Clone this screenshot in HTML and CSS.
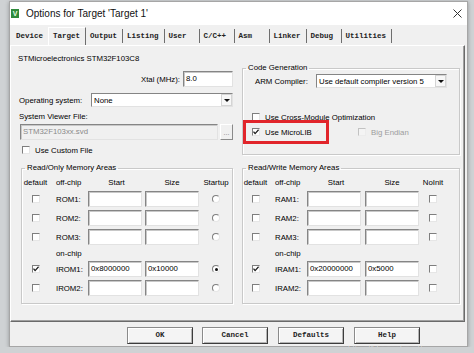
FILE: index.html
```html
<!DOCTYPE html>
<html lang="en">
  <head>
    <meta charset="UTF-8" />
    <meta name="viewport" content="width=device-width, initial-scale=1.0" />
    <title>Options for Target 'Target 1'</title>
    <link rel="stylesheet" href="styles.css">
  </head>
  <body>
    <div class="window">
      <div class="titlebar">
        <span class="app-icon">V</span>
        <span class="title">Options for Target 'Target 1'</span>
        <svg class="close" width="9" height="9" viewBox="0 0 9 9">
          <path d="M0.5 0.5 L8.5 8.5 M8.5 0.5 L0.5 8.5" stroke="#333" stroke-width="1" fill="none" />
        </svg>
      </div>

      <div class="tabs">
        <span class="tab no-sep">Device</span>
        <span class="tab active">Target</span>
        <span class="tab">Output</span>
        <span class="tab">Listing</span>
        <span class="tab">User</span>
        <span class="tab">C/C++</span>
        <span class="tab">Asm</span>
        <span class="tab">Linker</span>
        <span class="tab">Debug</span>
        <span class="tab">Utilities</span>
      </div>

      <div class="panel">
        <div class="col">
          <div class="device">STMicroelectronics STM32F103C8</div>
          <div class="xtal-row">
            <span>Xtal (MHz):</span>
            <span class="field xtal">8.0</span>
          </div>
          <div class="os-row">
            <span class="os-label">Operating system:</span>
            <span class="select os">None<span class="arrow"><i></i></span></span>
          </div>
          <div class="svf-label">System Viewer File:</div>
          <div class="svf-row">
            <span class="field disabled">STM32F103xx.svd</span>
            <span class="browse">...</span>
          </div>
          <div class="check-row"><span class="check"></span>Use Custom File</div>

          <fieldset class="group ro">
            <legend>Read/Only Memory Areas</legend>
            <div class="mem">
              <span class="c">default</span><span class="lbl">off-chip</span><span class="c">Start</span><span class="c">Size</span><span class="c">Startup</span>

              <span class="c check"></span><span class="lbl">ROM1:</span><span class="field"></span><span class="field"></span><span class="c radio"></span>
              <span class="c check"></span><span class="lbl">ROM2:</span><span class="field"></span><span class="field"></span><span class="c radio"></span>
              <span class="c check"></span><span class="lbl">ROM3:</span><span class="field"></span><span class="field"></span><span class="c radio"></span>

              <span></span><span class="lbl onchip">on-chip</span>

              <span class="c check on"><svg width="6" height="6" viewBox="0 0 6 6"><polyline points="0.5,2.6 2.1,4.6 5.6,0.8" /></svg></span><span class="lbl">IROM1:</span><span class="field">0x8000000</span><span class="field">0x10000</span><span class="c radio on"></span>
              <span class="c check"></span><span class="lbl">IROM2:</span><span class="field"></span><span class="field"></span><span class="c radio"></span>
            </div>
          </fieldset>
        </div>

        <div class="col">
          <fieldset class="group codegen">
            <legend>Code Generation</legend>
            <div class="arm-row">
              <span class="arm-label">ARM Compiler:</span>
              <span class="select arm">Use default compiler version 5<span class="arrow"><i></i></span></span>
            </div>
            <div class="opt-row first">
              <span class="opt"><span class="check"></span>Use Cross-Module Optimization</span>
            </div>
            <div class="opt-row">
              <span class="opt wide">
                <span class="check on"><svg width="6" height="6" viewBox="0 0 6 6"><polyline points="0.5,2.6 2.1,4.6 5.6,0.8" /></svg></span>Use MicroLIB
                <span class="highlight"></span>
              </span>
              <span class="opt off"><span class="check dim"></span>Big Endian</span>
            </div>
          </fieldset>

          <fieldset class="group rw">
            <legend>Read/Write Memory Areas</legend>
            <div class="mem">
              <span class="c">default</span><span class="lbl">off-chip</span><span class="c">Start</span><span class="c">Size</span><span class="c">NoInit</span>

              <span class="c check"></span><span class="lbl">RAM1:</span><span class="field"></span><span class="field"></span><span class="c check"></span>
              <span class="c check"></span><span class="lbl">RAM2:</span><span class="field"></span><span class="field"></span><span class="c check"></span>
              <span class="c check"></span><span class="lbl">RAM3:</span><span class="field"></span><span class="field"></span><span class="c check"></span>

              <span></span><span class="lbl onchip">on-chip</span>

              <span class="c check on"><svg width="6" height="6" viewBox="0 0 6 6"><polyline points="0.5,2.6 2.1,4.6 5.6,0.8" /></svg></span><span class="lbl">IRAM1:</span><span class="field">0x20000000</span><span class="field">0x5000</span><span class="c check"></span>
              <span class="c check"></span><span class="lbl">IRAM2:</span><span class="field"></span><span class="field"></span><span class="c check"></span>
            </div>
          </fieldset>
        </div>
      </div>

      <div class="footer">
        <span class="btn">OK</span>
        <span class="btn">Cancel</span>
        <span class="btn">Defaults</span>
        <span class="btn help">Help</span>
      </div>

      <div class="watermark">https://blog.csdn.net/</div>
    </div>
  </body>
</html>
```

FILE: styles.css
```css
* {
  box-sizing: border-box;
}

body {
  margin: 0;
  background: #cfd2d4;
  font-family: "Liberation Sans", Arial, sans-serif;
  font-size: 7.8px;
  color: #000;
}


.window {
  position: relative;
  width: 459px;
  height: 346px;
  margin: 1px 0 0 9px;
  border: 1px solid #a6a6a6;
  background: #f0f0f0;
  display: flex;
  flex-direction: column;
  box-shadow: 0 1px 4px rgba(0, 0, 0, 0.3);
}


/* title bar */
.titlebar {
  flex: none;
  height: 23px;
  background: #fff;
  display: flex;
  align-items: center;
  padding: 0 5px 0 1px;
}

.app-icon {
  width: 8px;
  height: 9px;
  background: #2f8a3b;
  color: #eaffe4;
  font: bold 7px/9px "Liberation Sans", sans-serif;
  text-align: center;
}

.title {
  margin-left: 7px;
  font-size: 10px;
  color: #111;
}

.close {
  margin-left: auto;
}


/* tabs */
.tabs {
  flex: none;
  height: 20px;
  display: flex;
  align-items: flex-end;
  padding-left: 2px;
  font: bold 7.5px "Liberation Mono", monospace;
  color: #222;
}

.tab {
  min-width: 35px;
  height: 14px;
  line-height: 14px;
  margin-bottom: 2px;
  padding: 0 5px 0 4px;
  border-right: 1px solid #6e6e6e;
}

.tab.no-sep {
  border-right: none;
  min-width: 34px;
}

.tab.active {
  height: 18px;
  line-height: 16px;
  margin-bottom: 0;
  border-left: 1px solid #fff;
  border-top: 1px solid #fff;
}


/* tab page */
.panel {
  flex: none;
  height: 277px;
  margin-right: 2px;
  border-top: 1px solid #fff;
  border-left: 1px solid #fff;
  border-right: 1px solid #6a6a6a;
  border-bottom: 1px solid #6a6a6a;
  box-shadow: inset -1px -1px 0 #a0a0a0;
  display: grid;
  grid-template-columns: 215px 218px;
  column-gap: 9px;
  align-items: start;
  padding: 7px 4px 0 7px;
}

.device {
  line-height: 12px;
}

.xtal-row {
  display: flex;
  justify-content: flex-end;
  align-items: center;
  gap: 3px;
  margin-top: 6px;
  height: 16px;
}

.os-row {
  display: flex;
  justify-content: space-between;
  align-items: center;
  margin-top: 6px;
  height: 14px;
}

.os-label {
  padding-left: 1px;
}

.svf-label {
  margin-top: 4px;
  line-height: 12px;
  padding-left: 1px;
}

.svf-row {
  display: flex;
  gap: 2px;
  margin-top: 1px;
  height: 16px;
  padding-left: 2px;
}

.check-row {
  display: flex;
  align-items: center;
  gap: 5px;
  margin-top: 4px;
  height: 12px;
  padding-left: 4px;
}


/* edit boxes */
.field {
  height: 16px;
  border: 1px solid;
  border-color: #858585 #e2e2e2 #e2e2e2 #858585;
  box-shadow: inset 1px 1px 0 #c8c8c8;
  background: #fff;
  padding: 0 2px;
  line-height: 14px;
  white-space: nowrap;
  overflow: hidden;
}

.xtal {
  width: 50px;
}

.field.disabled {
  width: 198px;
  background: #f0f0f0;
  color: #8a8a8a;
}

.browse {
  width: 13px;
  height: 16px;
  border: 1px solid;
  border-color: #fff #8a8a8a #8a8a8a #fff;
  color: #777;
  text-align: center;
  line-height: 16px;
  font-size: 7px;
}

.select {
  height: 14px;
  border: 1px solid;
  border-color: #858585 #e2e2e2 #e2e2e2 #858585;
  background: #fff;
  display: flex;
  align-items: center;
  padding-left: 2px;
  white-space: nowrap;
}

.select.os {
  width: 142px;
}

.select.arm {
  width: 131px;
}

.arrow {
  margin-left: auto;
  width: 11px;
  height: 12px;
  border: 1px solid #d4d4d4;
  background: #f7f7f7;
  display: flex;
  align-items: center;
  justify-content: center;
}

.arrow i {
  border-left: 3px solid transparent;
  border-right: 3px solid transparent;
  border-top: 3px solid #111;
}


/* check boxes and radios */
.check {
  width: 8px;
  height: 8px;
  border: 1px solid;
  border-color: #7e7e7e #e6e6e6 #e6e6e6 #7e7e7e;
  background: #fff;
  display: inline-flex;
  align-items: center;
  justify-content: center;
  flex: none;
}

.check svg polyline {
  fill: none;
  stroke: #1a1a1a;
  stroke-width: 1.3;
}

.check.dim {
  border-color: #c2c2c2 #ececec #ececec #c2c2c2;
  background: #f4f4f4;
}

.radio {
  width: 8px;
  height: 8px;
  border-radius: 50%;
  border: 1px solid;
  border-color: #7e7e7e #e6e6e6 #e6e6e6 #7e7e7e;
  background: #fff;
  display: inline-flex;
  align-items: center;
  justify-content: center;
}

.radio.on::after {
  content: "";
  width: 3px;
  height: 3px;
  border-radius: 50%;
  background: #111;
}


/* group boxes */
.group {
  margin: 0;
  padding: 3px 0 7px;
  min-width: 0;
  border: 1px solid #c9c9c9;
  box-shadow: 1px 1px 0 #fff, inset 1px 1px 0 #fff;
}

.group legend {
  padding: 0 2px;
  margin-left: 3px;
  line-height: 10px;
}

.group.ro {
  margin: 7px 0 0 3px;
}

.group.codegen {
  margin-top: 10px;
  padding: 1px 0 16px;
}

.group.rw {
  margin-top: 8px;
}

.mem {
  display: grid;
  grid-template-columns: 27px 39px 57px 54px 34px;
  grid-template-rows: 12px 16px 16px 16px 10px 16px 16px;
  row-gap: 3px;
  align-items: center;
}

.rw .mem {
  grid-template-columns: 25px 39px 58px 54px 28px;
}

.mem .c {
  justify-self: center;
}

.mem .lbl {
  padding-left: 7px;
  white-space: nowrap;
}

.mem .onchip {
  grid-column: 2 / -1;
}

.mem .field {
  width: 54px;
}


/* code generation */
.arm-row {
  display: flex;
  align-items: center;
  height: 14px;
  margin-left: 12px;
}

.arm-label {
  width: 61px;
}

.opt-row {
  display: flex;
  margin-left: 9px;
  margin-top: 3px;
}

.opt-row.first {
  margin-top: 23px;
}

.opt {
  position: relative;
  display: flex;
  align-items: center;
  gap: 5px;
  height: 12px;
  white-space: nowrap;
}

.opt.wide {
  width: 106px;
}

.opt.off {
  color: #9c9c9c;
}

.highlight {
  position: absolute;
  left: -9px;
  top: -6px;
  width: 86px;
  height: 24px;
  border: 3px solid #e1252b;
}


/* buttons */
.footer {
  flex: none;
  display: flex;
  padding: 5px 5px 0 117px;
}

.btn {
  width: 66px;
  height: 17px;
  font: bold 7.5px/15px "Liberation Mono", monospace;
  text-align: center;
  color: #222;
  background: #f4f4f4;
  border: 1px solid;
  border-color: #8a8a8a #3c3c3c #3c3c3c #8a8a8a;
  box-shadow: inset 1px 1px 0 #fff, inset -1px -1px 0 #b4b4b4;
}

.btn + .btn {
  margin-left: 9px;
}

.btn + .btn + .btn {
  margin-left: 10px;
}

.btn.help {
  margin-left: auto;
}

.watermark {
  position: absolute;
  left: 338px;
  top: 342px;
  font-size: 8px;
  line-height: 9px;
  color: rgba(255, 255, 255, 0.75);
  text-shadow: 0 0 1px rgba(0, 0, 0, 0.35);
}
```
